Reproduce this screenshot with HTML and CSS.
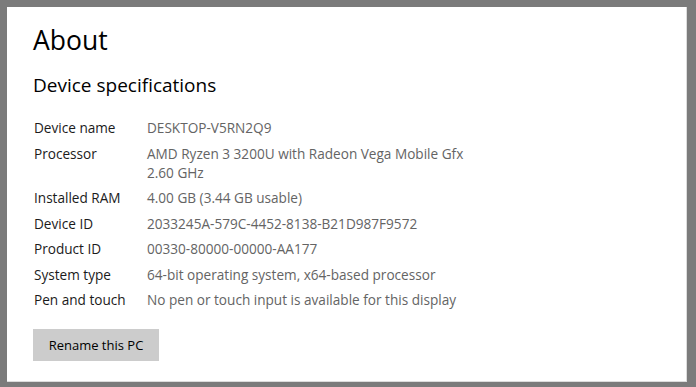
FILE: index.html
```html
<!DOCTYPE html>
<html lang="en">
<head>
  <meta charset="UTF-8">
  <meta name="viewport" content="width=device-width, initial-scale=1.0">
  <title>About</title>
  <link rel="stylesheet" href="styles.css">
</head>
<body>
  <div class="panel">
    <h1>About</h1>
    <h2>Device specifications</h2>

    <div class="specs">
      <div class="label">Device name</div>
      <div class="value">DESKTOP-V5RN2Q9</div>
      <div class="label">Processor</div>
      <div class="value">AMD Ryzen 3 3200U with Radeon Vega Mobile Gfx<br>2.60 GHz</div>
      <div class="label">Installed RAM</div>
      <div class="value">4.00 GB (3.44 GB usable)</div>
      <div class="label">Device ID</div>
      <div class="value">2033245A-579C-4452-8138-B21D987F9572</div>
      <div class="label">Product ID</div>
      <div class="value">00330-80000-00000-AA177</div>
      <div class="label">System type</div>
      <div class="value">64-bit operating system, x64-based processor</div>
      <div class="label">Pen and touch</div>
      <div class="value">No pen or touch input is available for this display</div>
    </div>

    <button class="rename">Rename this PC</button>
  </div>
</body>
</html>
```

FILE: styles.css
```css
html, body { height: 100%; }
body {
  margin: 0;
  padding: 7px 9px 5px 7px;
  box-sizing: border-box;
  background: #7b7b7b;
  font-family: "Open Sans", "Noto Sans", sans-serif;
}
.panel {
  height: 100%;
  box-sizing: border-box;
  background: #fff;
  border-right: 1px solid #dcdcdc;
  border-bottom: 1px solid #dcdcdc;
  padding: 17px 26px 0 26px;
}
h1 { margin: 0; font-size: 26.5px; font-weight: 400; line-height: 32px; color: #000; }
h2 { margin: 16px 0 0; font-size: 19px; font-weight: 400; line-height: 26px; color: #000; }
.specs {
  display: grid;
  grid-template-columns: 114px auto;
  row-gap: 6.5px;
  margin-top: 20px;
  font-size: 13.6px;
  line-height: 19px;
}
.label { color: #1b1b1b; padding-left: 1px; }
.value { color: #646464; }
.rename {
  display: block;
  margin-top: 20px;
  width: 126px;
  height: 32px;
  padding: 0;
  border: 0;
  background: #ccc;
  font-family: inherit;
  font-size: 13px;
  color: #000;
}
```
